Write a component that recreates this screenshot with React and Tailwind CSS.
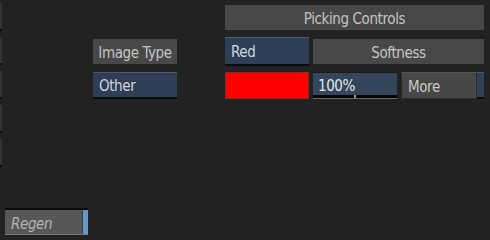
import React from "react";

const font = { fontFamily: '"DejaVu Sans Condensed", "DejaVu Sans", sans-serif' };

function GreyLabel({ children, className = "" }) {
  return (
    <div
      className={`flex items-center justify-center pt-[3px] bg-[#484848] text-[#c4c4c4] text-[15px] tracking-[-0.4px] leading-none ${className}`}
    >
      {children}
    </div>
  );
}

function BlueButton({ children, className = "" }) {
  return (
    <div
      className={`flex items-center pl-[6px] pt-[3px] bg-[#2d3e56] border-t border-t-[#4c5c72] border-b-2 border-b-[#0c0c0c] text-[#d2d6dc] text-[15px] tracking-[-0.4px] leading-none ${className}`}
    >
      {children}
    </div>
  );
}

export default function App() {
  return (
    <div className="w-[490px] h-[240px] bg-[#222222] flex overflow-hidden" style={font}>
      {/* left edge segments */}
      <div className="flex flex-col gap-[6px] pt-[3px] w-[2px] shrink-0">
        {[0, 1, 2, 3, 4].map((i) => (
          <div key={i} className="h-[28px] w-[2px] bg-[#333333] border-b-2 border-b-[#0e0e0e]" />
        ))}
      </div>

      <div className="flex flex-col flex-1 pl-[3px]">
        {/* row 1 */}
        <div className="flex pt-[5px] pl-[220px]">
          <GreyLabel className="w-[259px] h-[25px]">Picking Controls</GreyLabel>
        </div>

        {/* row 2 */}
        <div className="flex items-center pt-[7px] pl-[88px]">
          <GreyLabel className="w-[84px] h-[25px]">Image Type</GreyLabel>
          <BlueButton className="ml-[48px] w-[84px] h-[29px]">Red</BlueButton>
          <GreyLabel className="ml-[4px] w-[171px] h-[25px]">Softness</GreyLabel>
        </div>

        {/* row 3 */}
        <div className="flex pt-[6px] pl-[88px]">
          <BlueButton className="w-[84px] h-[27px]">Other</BlueButton>
          <div className="ml-[48px] w-[84px] h-[27px] bg-[#ff0000] border border-[#7c2e2e]" />
          <div className="ml-[4px] w-[84px] h-[27px] flex flex-col">
            <div className="flex-1 flex items-end pl-[5px] pb-[1px] bg-[#34465b] border-t border-t-[#1a1a1a] text-[#e2e6ea] text-[15px] tracking-[-0.4px] leading-none">
              100%
            </div>
            <div className="h-[3px] bg-[#050505] flex justify-start">
              <div className="ml-[41px] w-[2px] h-[3px] bg-[#9a9a9a]" />
            </div>
            <div className="h-[1px] bg-[#6a6a6a]" />
          </div>
          <div className="ml-[4px] flex h-[27px]">
            <div className="w-[76px] flex items-center pl-[6px] pt-[3px] bg-[#474747] border border-[#2c2c2c] border-t-[#555555] text-[#c8c8c8] text-[15px] tracking-[-0.4px] leading-none">
              More
            </div>
            <div className="w-[7px] bg-[#2f4059] border-t border-t-[#4c5c72] border-b-2 border-b-[#0c0c0c]" />
          </div>
        </div>

        <div className="flex-1" />

        {/* Regen */}
        <div className="flex pb-[5px]">
          <div className="flex h-[27px] border-t-2 border-t-[#0a0a0a] border-b border-b-[#7a7a7a]">
            <div className="w-[77px] flex items-center pl-[6px] pt-[4px] bg-[#575757] italic text-[#b4b4b4] text-[15px] tracking-[-0.4px] leading-none">
              Regen
            </div>
            <div className="w-[6px] bg-[#5f9bc6] border-l border-l-[#3a3a3a]" />
          </div>
        </div>
      </div>
    </div>
  );
}
